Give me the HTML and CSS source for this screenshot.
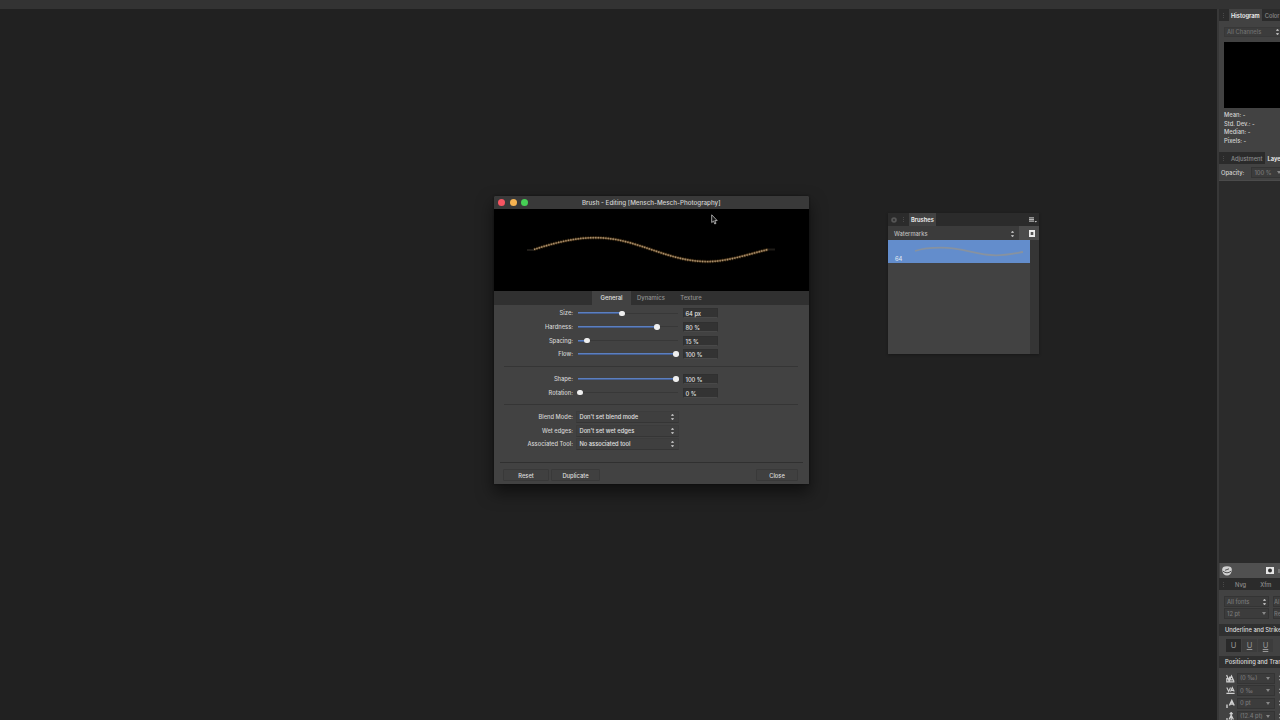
FILE: index.html
```
<!DOCTYPE html>
<html>
    <head>
        <title>Brush - Editing</title>
        <meta charset="UTF-8">
        <link rel="stylesheet" href="styles.css">
    </head>
    <body>
        <div class="topbar"></div>
        <div class="main">
            <div class="canvas"></div>
            <div class="studio">
                <div class="tabs">
                    <span class="grip"></span>
                    <span class="tab on">Histogram</span>
                    <span class="tab">Color</span>
                </div>
                <div class="histogram">
                    <div class="channels"><span>All Channels</span><i class="updown"></i></div>
                    <div class="graph"></div>
                    <ul class="stats">
                        <li>Mean: -</li>
                        <li>Std. Dev.: -</li>
                        <li>Median: -</li>
                        <li>Pixels: -</li>
                    </ul>
                </div>
                <div class="tabs">
                    <span class="grip"></span>
                    <span class="tab">Adjustment</span>
                    <span class="tab on">Laye</span>
                </div>
                <div class="opacity">
                    <span>Opacity:</span>
                    <div class="num">100 %<i class="down"></i></div>
                </div>
                <div class="layers"></div>
                <div class="layerbar">
                    <svg width="10" height="10" viewBox="0 0 10 10">
                        <ellipse cx="5" cy="3.6" rx="4.8" ry="3.3" fill="#d0d0d0"/>
                        <path d="M.3 4.5Q1 9.4 5 9.6Q9 9.4 9.7 4.5Q5 8.6 .3 4.5Z" fill="#d0d0d0"/>
                        <path d="M1 5.2Q5 8.4 9 5.2M3 4.3L7 2.8" fill="none" stroke="#444" stroke-width=".9"/>
                    </svg>
                    <svg class="mask" width="8" height="7" viewBox="0 0 8 7">
                        <rect width="8" height="7" fill="#e6e6e6"/>
                        <circle cx="4" cy="3.5" r="2" fill="#333"/>
                    </svg>
                    <b></b>
                </div>
                <div class="tabs tabs-nav">
                    <span class="grip"></span>
                    <span class="tab">Nvg</span>
                    <span class="tab">Xfm</span>
                </div>
                <div class="fonts">
                    <div class="fontrow">
                        <div class="num"><span>All fonts</span><i class="updown"></i></div>
                        <div class="num side">Al</div>
                    </div>
                    <div class="fontrow">
                        <div class="num"><span>12 pt</span><i class="down"></i></div>
                        <div class="num side">Re</div>
                    </div>
                </div>
                <div class="heading">Underline and Strike</div>
                <div class="underlines">
                    <span class="first">U</span>
                    <span class="u1">U</span>
                    <span class="u2">U</span>
                </div>
                <div class="heading">Positioning and Tran</div>
                <div class="position">
                    <div class="posrow">
                        <svg width="9" height="9" viewBox="0 0 9 9"><path d="M.6 1L2.6 6L4 2.5M.8 4V7.8H8.4M3 7.5L5.5 2L8 7.5M4 5.8H7" fill="none" stroke="#d0d0d0" stroke-width="1.2"/></svg>
                        <div class="num"><span>(0 ‰)</span><i class="down"></i></div><i class="updown"></i>
                    </div>
                    <div class="posrow">
                        <svg width="9" height="9" viewBox="0 0 9 9"><path d="M.8 1.5L2.7 5.5L4.5 1.5M4.5 5.5L6.3 1.5L8.2 5.5M5.4 4.4H7.4M.4 7.4H8.6" fill="none" stroke="#d0d0d0" stroke-width="1.1"/></svg>
                        <div class="num"><span>0 ‰</span><i class="down"></i></div><i class="updown"></i>
                    </div>
                    <div class="posrow">
                        <svg width="9" height="9" viewBox="0 0 9 9"><path d="M1 9V5.5M3.4 6.5L5.8 1.5L8.2 6.5M4.4 5H7.4" fill="none" stroke="#d0d0d0" stroke-width="1.4"/></svg>
                        <div class="num"><span>0 pt</span><i class="down"></i></div><i class="updown"></i>
                    </div>
                    <div class="posrow">
                        <svg width="9" height="9" viewBox="0 0 9 9"><path d="M1 9V6M3 7.5L5.2 3L7.4 7.5M5.2 1V9M3.7 2.2L5.2 .6L6.7 2.2" fill="none" stroke="#d0d0d0" stroke-width="1.2"/></svg>
                        <div class="num"><span>(12.4 pt)</span><i class="down"></i></div><i class="updown"></i>
                    </div>
                </div>
            </div>
        </div>

        <div class="dialog">
            <div class="titlebar">
                <i class="light red"></i><i class="light yellow"></i><i class="light green"></i>
                <span>Brush - Editing [Mensch-Mesch-Photography]</span>
            </div>
            <svg class="preview" width="314" height="82" viewBox="0 0 314 82" preserveAspectRatio="xMinYMin">
                <path d="M33 41H40M274 40.5H281" stroke="#1e1b17" stroke-width="2"/>
                <path class="glow" d="M40 40.5C60 34 80 28.7 101 28.7C144 28.7 171 52.6 214 52.6C234 52.6 255 45 274 40.5"/>
                <path class="stroke" d="M40 40.5C60 34 80 28.7 101 28.7C144 28.7 171 52.6 214 52.6C234 52.6 255 45 274 40.5"/>
                <path class="beads" d="M40 40.5C60 34 80 28.7 101 28.7C144 28.7 171 52.6 214 52.6C234 52.6 255 45 274 40.5"/>
            </svg>
            <div class="dialog-tabs">
                <span class="on">General</span>
                <span>Dynamics</span>
                <span>Texture</span>
            </div>
            <div class="form">
                <div class="row"><label>Size:</label><div class="slider"><i class="fill" style="width: 44%"></i><i class="knob"></i></div><div class="value">64 px</div></div>
                <div class="row"><label>Hardness:</label><div class="slider"><i class="fill" style="width: 79%"></i><i class="knob"></i></div><div class="value">80 %</div></div>
                <div class="row"><label>Spacing:</label><div class="slider"><i class="fill" style="width: 9%"></i><i class="knob"></i></div><div class="value">15 %</div></div>
                <div class="row"><label>Flow:</label><div class="slider"><i class="fill" style="width: 98%"></i><i class="knob"></i></div><div class="value">100 %</div></div>
                <hr>
                <div class="row"><label>Shape:</label><div class="slider"><i class="fill" style="width: 98%"></i><i class="knob"></i></div><div class="value">100 %</div></div>
                <div class="row"><label>Rotation:</label><div class="slider"><i class="fill" style="width: 2%"></i><i class="knob"></i></div><div class="value">0 %</div></div>
                <hr>
                <div class="row"><label>Blend Mode:</label><div class="select"><span>Don't set blend mode</span><i class="updown"></i></div></div>
                <div class="row"><label>Wet edges:</label><div class="select"><span>Don't set wet edges</span><i class="updown"></i></div></div>
                <div class="row"><label>Associated Tool:</label><div class="select"><span>No associated tool</span><i class="updown"></i></div></div>
            </div>
            <div class="buttons">
                <button class="reset">Reset</button>
                <button class="duplicate">Duplicate</button>
                <button class="close">Close</button>
            </div>
        </div>

        <div class="brushes">
            <div class="brushes-tabs">
                <svg width="6" height="6" viewBox="0 0 6 6"><circle cx="3" cy="3" r="2.8" fill="#555"/><path d="M2 2L4 4M4 2L2 4" stroke="#2b2b2b" stroke-width=".7"/></svg>
                <span class="grip"></span>
                <span class="tab on">Brushes</span>
                <svg class="menu" width="8" height="6" viewBox="0 0 8 6"><path d="M0 .9H5M0 2.6H5M0 4.3H5" stroke="#b4b4b4" stroke-width="1.1"/><path d="M5.5 4H8L6.8 5.6Z" fill="#c8c8c8"/></svg>
            </div>
            <div class="category">
                <div class="cat-name"><span>Watermarks</span><i class="updown"></i></div>
                <div class="cat-view">
                    <svg width="6" height="7" viewBox="0 0 6 7"><rect width="6" height="7" fill="#ececec"/><rect x="1.7" y="2" width="2.6" height="3" fill="#555"/></svg>
                </div>
            </div>
            <div class="brush-list">
                <div class="brush-item">
                    <span>64</span>
                    <svg width="110" height="14" viewBox="0 0 110 14"><path d="M1 6C10 3 18 2.7 27 2.7C52 2.7 60 10.3 82 10.3C92 10.3 100 8.5 109 7"/></svg>
                </div>
            </div>
        </div>

        <svg class="cursor" width="7" height="11" viewBox="0 0 7 11">
            <path d="M.7 .8V8.6L2.5 7L3.8 10L5 9.4L3.8 6.6H6.2Z" fill="#111" stroke="#c9c9c9" stroke-width=".8"/>
        </svg>
    </body>
</html>
```
FILE: styles.css
```
* {
    margin: 0;
    padding: 0;
    box-sizing: border-box;
    list-style: none;
}

body {
    width: 1280px;
    height: 720px;
    display: flex;
    flex-direction: column;
    overflow: hidden;
    position: relative;
    background: #212121;
    color: #d2d2d2;
    font-family: Inter, "Liberation Sans", sans-serif;
    font-size: 5.75px;
    font-weight: 500;
    line-height: 8px;
    white-space: nowrap;
}

svg {
    display: block;
    flex: none;
}

.topbar {
    height: 9px;
    flex: none;
    background: #333;
}

.main {
    flex: 1;
    min-height: 0;
    display: flex;
}

.canvas {
    flex: 1;
}

/* small arrows */
.updown {
    width: 3px;
    height: 6px;
    flex: none;
    display: flex;
    flex-direction: column;
    justify-content: space-between;
}

.updown::before,
.updown::after {
    content: "";
    border: 1.5px solid transparent;
    border-top-width: 0;
    border-bottom: 2px solid #b4b4b4;
}

.updown::after {
    border-bottom-width: 0;
    border-top: 2px solid #b4b4b4;
}

.down {
    flex: none;
    border: 2px solid transparent;
    border-top: 3px solid #888;
    border-bottom: 0;
}

.grip {
    width: 2px;
    height: 5px;
    flex: none;
    border-left: 1px dotted #484848;
}

/* right studio */
.studio {
    width: 63px;
    flex: none;
    overflow: hidden;
    background: #424242;
    border-left: 2px solid #383838;
}

.tabs {
    height: 12px;
    display: flex;
    align-items: center;
    padding-left: 4px;
    background: #2b2b2b;
    color: #8c8c8c;
}

.tab {
    height: 100%;
    padding: 0 2px;
    line-height: 13px;
}

.tabs .grip {
    margin-right: 4px;
}

.tabs .tab {
    margin-right: 1px;
}

.tab.on {
    background: #424242;
    color: #f0f0f0;
    font-weight: 600;
}

.histogram {
    height: 131px;
    padding: 6px 0 0 5px;
}

.channels {
    height: 10px;
    width: 56px;
    display: flex;
    align-items: center;
    justify-content: space-between;
    padding: 0 1px 0 2px;
    background: #3c3c3c;
    border: 1px solid #383838;
    border-right: 0;
    color: #707070;
}

.graph {
    height: 66px;
    margin-top: 5px;
    background: #000;
}

.stats {
    padding-top: 2px;
    font-size: 5.8px;
}

.stats li {
    height: 8.5px;
    line-height: 9px;
}

.opacity {
    height: 17px;
    display: flex;
    align-items: center;
    gap: 7px;
    padding: 1px 0 0 2px;
    border-bottom: 1px solid #4b4b4b;
    font-size: 5.8px;
}

.num {
    height: 11px;
    flex: none;
    display: flex;
    align-items: center;
    background: #3c3c3c;
    border: 1px solid #343434;
    padding-left: 2px;
    color: #787878;
}

.opacity .num {
    width: 40px;
    gap: 5px;
}

.layers {
    height: 382px;
    background: #2b2b2b;
}

.layerbar {
    height: 15px;
    display: flex;
    align-items: center;
    padding-left: 2px;
    background: #505050;
    border-left: 1px solid #424242;
}

.mask {
    margin-left: 34px;
}

.layerbar b {
    width: 3px;
    height: 4px;
    margin-left: 4px;
    background: #777;
}

.tabs-nav .tab {
    margin: 0 6px 0 4px;
}

.fonts {
    height: 34px;
    padding: 6px 0 0 5px;
    display: flex;
    flex-direction: column;
    gap: 1px;
}

.fontrow {
    display: flex;
    gap: 4px;
}

.fontrow .num {
    width: 45px;
    justify-content: space-between;
    padding-right: 2px;
}

.fontrow .side {
    padding: 0;
}

.heading {
    height: 12px;
    line-height: 12px;
    padding-left: 6px;
    background: #303030;
    color: #dcdcdc;
    font-size: 5.8px;
}

.underlines {
    height: 20px;
    display: flex;
    gap: 1px;
    padding: 3px 0 0 7px;
}

.underlines span {
    width: 15px;
    height: 13px;
    line-height: 13px;
    font-size: 7.5px;
    font-weight: 400;
    text-align: center;
    background: #3c3c3c;
    color: #999;
}

.underlines .first {
    background: #292929;
}

.underlines .u1 {
    text-decoration: underline;
}

.underlines .u2 {
    text-decoration: underline double;
}

.position {
    padding-top: 4px;
}

.posrow {
    height: 12.6px;
    display: flex;
    align-items: center;
    padding-left: 7px;
}

.posrow .num {
    width: 38px;
    margin: 0 4px 0 2px;
    justify-content: space-between;
    padding-right: 4px;
}

/* brush editing window */
.dialog {
    width: 315px;
    height: 288px;
    position: absolute;
    left: 494px;
    top: 196px;
    display: flex;
    flex-direction: column;
    background: #424242;
    border-radius: 2px 2px 0 0;
    box-shadow: 0 8px 16px 1px rgba(0, 0, 0, .5), 0 0 2px #111;
}

.titlebar {
    height: 13px;
    display: flex;
    align-items: center;
    gap: 4.5px;
    padding-left: 4px;
    background: #393939;
    border-radius: 2px 2px 0 0;
}

.titlebar span {
    flex: 1;
    text-align: center;
    padding-right: 39px;
    font-size: 6.25px;
}

.light {
    width: 7px;
    height: 7px;
    border-radius: 50%;
}

.red {
    background: #f75562;
}

.yellow {
    background: #f6b351;
}

.green {
    background: #46cf55;
}

.preview {
    width: 100%;
    background: #000;
}

.preview path {
    fill: none;
}

.preview .glow {
    stroke: #2e210d;
    stroke-width: 3.4;
    stroke-dasharray: 1.5 1;
}

.preview .stroke {
    stroke: #64492a;
    stroke-width: 1.8;
}

.preview .beads {
    stroke: #a99474;
    stroke-width: 1.4;
    stroke-dasharray: 1.2 1.3;
}

.dialog-tabs {
    height: 14px;
    display: flex;
    justify-content: center;
    background: #303030;
    color: #929292;
    line-height: 14px;
    font-size: 5.9px;
}

.dialog-tabs span {
    width: 40px;
    text-align: center;
}

.dialog-tabs .on {
    width: 39px;
    background: #424242;
    color: #e2e2e2;
}

.form {
    height: 158px;
    margin: 0 6px;
    padding-top: 1.5px;
    border-bottom: 1px solid #303030;
}

.row {
    height: 13.65px;
    display: flex;
    align-items: center;
}

.row label {
    width: 73px;
    margin-right: 5px;
    text-align: right;
}

.form hr {
    height: 1px;
    margin: 4.5px 5px 5.5px 4px;
    border: 0;
    background: #353535;
}

.slider {
    width: 100px;
    height: 5px;
    margin-right: 5px;
    display: flex;
    align-items: center;
    background: linear-gradient(#383838, #383838) center / 100% 1px no-repeat;
}

.fill {
    height: 2px;
    background: #5b7fc0;
    border-bottom: 1px solid #465f90;
}

.knob {
    width: 5.5px;
    height: 5.5px;
    flex: none;
    margin: 0 -2.75px;
    border-radius: 50%;
    background: #efefef;
}

.value {
    width: 35px;
    height: 10px;
    line-height: 9px;
    padding-left: 1.5px;
    background: #333;
    border: 1px solid #303030;
    border-bottom-color: #494949;
    color: #e2e2e2;
}

.select {
    width: 103px;
    height: 12px;
    margin-left: -2px;
    display: flex;
    align-items: center;
    justify-content: space-between;
    padding: 0 4px 0 2.5px;
    background: #3f3f3f;
    border: 1px solid #3c3c3c;
    border-bottom-color: #353535;
    color: #e0e0e0;
}

.buttons {
    flex: 1;
    display: flex;
    align-items: center;
    padding: 3px 11px 0 9px;
    gap: 2px;
}

.buttons button {
    height: 12px;
    border: 1px solid #393939;
    border-radius: 1px;
    background: #404040;
    color: #dedede;
    font: 500 5.8px Inter, "Liberation Sans", sans-serif;
}

.reset {
    width: 46px;
}

.duplicate {
    width: 49px;
}

.close {
    width: 42px;
    margin-left: auto;
}

/* brushes panel */
.brushes {
    width: 151px;
    height: 141px;
    position: absolute;
    left: 888px;
    top: 213px;
    display: flex;
    flex-direction: column;
    background: #424242;
    box-shadow: 0 1px 3px rgba(0, 0, 0, .3);
}

.brushes-tabs {
    height: 13px;
    display: flex;
    align-items: center;
    padding: 0 2px 0 3px;
    background: #2b2b2b;
}

.brushes-tabs .grip {
    margin: 0 4px 0 6px;
}

.brushes-tabs .menu {
    margin-left: auto;
}

.category {
    height: 14px;
    display: flex;
}

.cat-name {
    width: 131px;
    display: flex;
    align-items: center;
    justify-content: space-between;
    padding: 1px 5px 0 6px;
    background: #3b3b3b;
    color: #bdbdbd;
    font-size: 5.8px;
}

.cat-view {
    flex: 1;
    display: flex;
    align-items: center;
    justify-content: center;
    padding-left: 6px;
    background: #4c4c4c;
}

.brush-list {
    flex: 1;
    border-right: 9px solid #353535;
}

.brush-item {
    height: 23px;
    display: flex;
    gap: 12px;
    align-items: flex-end;
    padding: 0 0 0 7px;
    background: #638dcc;
    color: #dfe6f0;
}

.brush-item svg {
    align-self: center;
}

.brush-item path {
    fill: none;
    stroke: #8792a0;
    stroke-width: 1.8;
}

.cursor {
    position: absolute;
    left: 711px;
    top: 214px;
}
```
